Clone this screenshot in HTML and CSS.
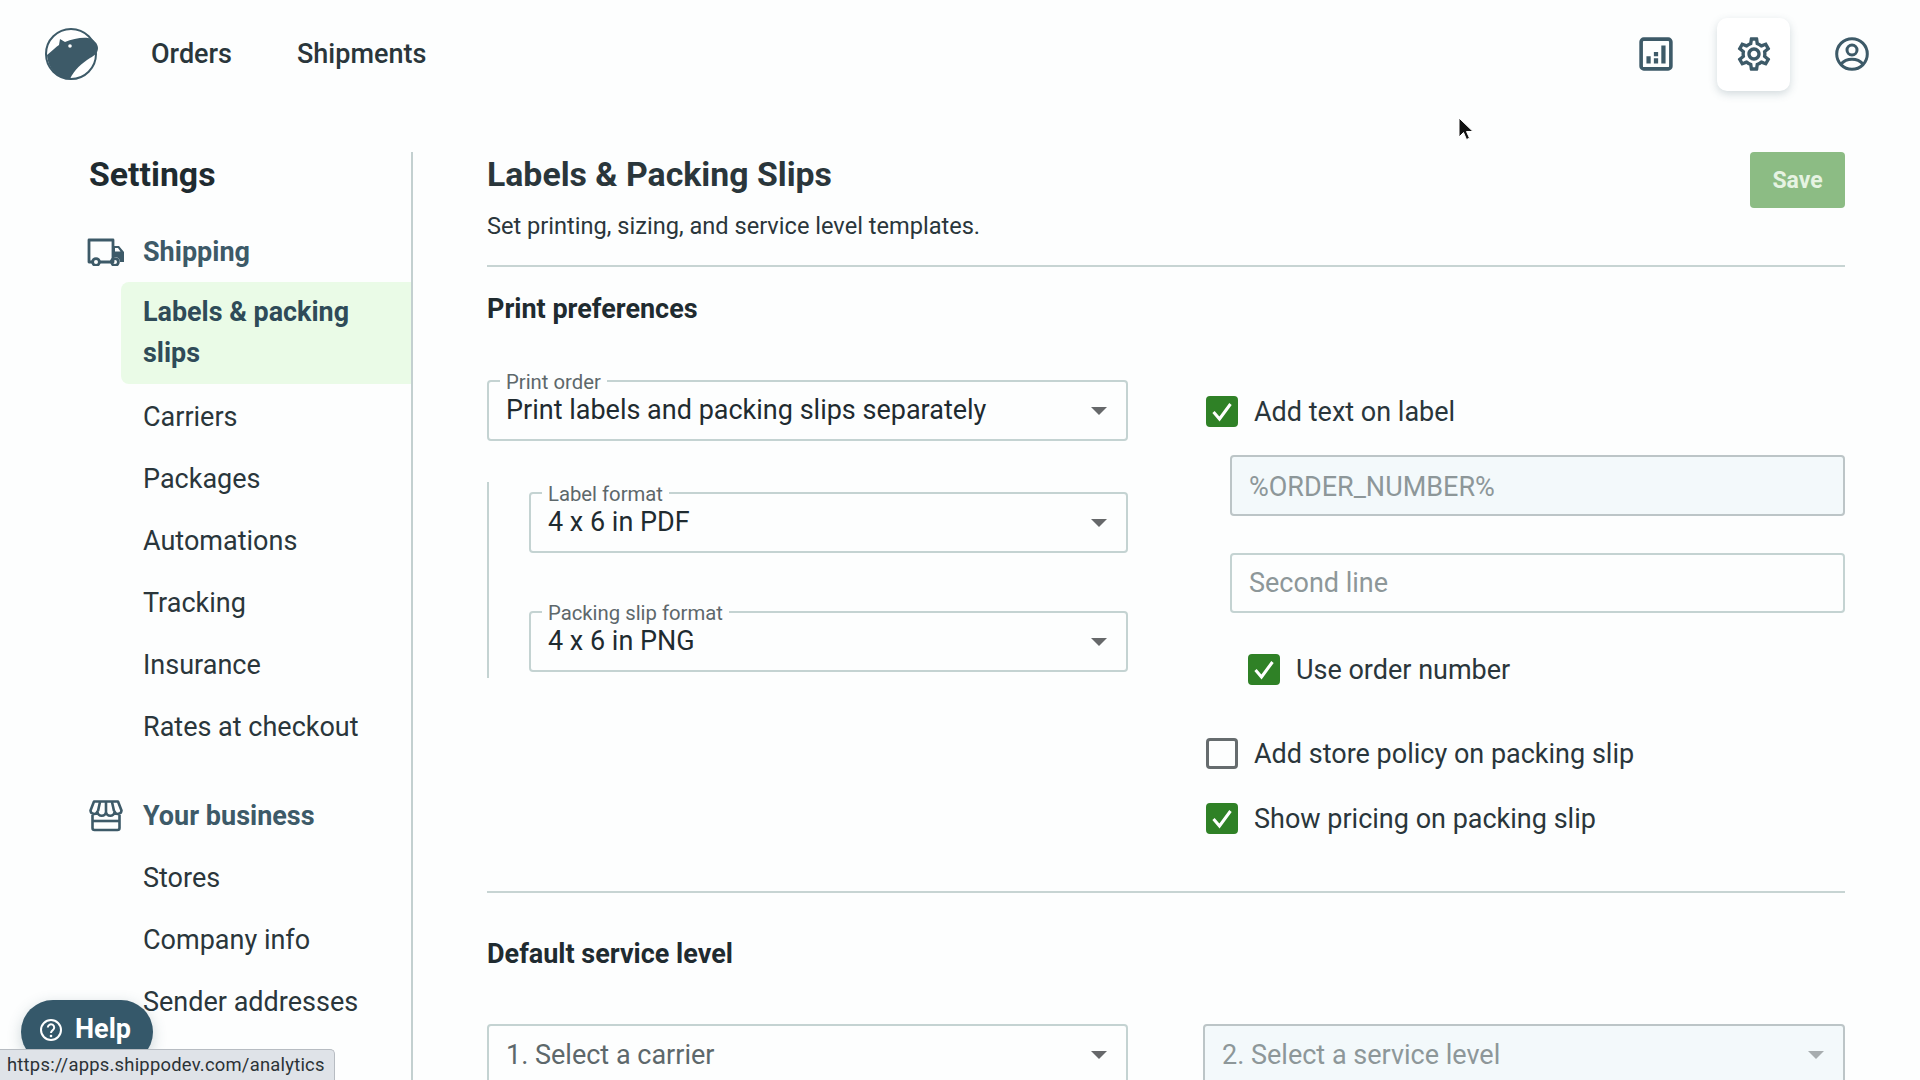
FILE: index.html
```html
<!DOCTYPE html>
<html lang="en">
<head>
<meta charset="utf-8">
<title>Labels &amp; Packing Slips</title>
<link rel="stylesheet" href="styles.css">
</head>
<body>
<header class="topbar">
  <svg class="logo" viewBox="0 0 56 54" aria-hidden="true">
    <circle cx="27" cy="27" r="25" fill="#fff" stroke="#3d5a68" stroke-width="2"/>
    <path d="M3 28C8 24 12 20 15 18L16 12L21 15C28 12 38 10 44 11C50 12 54 17 54 21C54 26 50 29 46 31C38 36 30 43 26 52C14 52 4 42 3 28Z" fill="#3d5a68"/>
    <circle cx="26" cy="19" r="1.800" fill="#fff"/>
  </svg>
  <nav class="topnav">
    <a class="topnav-link">Orders</a>
    <a class="topnav-link">Shipments</a>
  </nav>
  <div class="toolbar">
    <span class="tool">
      <svg class="tool-icon" viewBox="0 0 32 32" aria-hidden="true"><rect x="2" y="2" width="28" height="28" rx="2.500" fill="none" stroke="#3d5a68" stroke-width="3.400"/><path d="M7 18h4v7H7zM14 14h4v4h-4zM14 20h4v5h-4zM21 8h4v17h-4z" fill="#3d5a68"/></svg>
    </span>
    <span class="tool tool-active">
      <svg class="tool-gear" viewBox="0 0 24 24" aria-hidden="true"><path fill="#3d5a68" d="M19.430 12.980c.04-.32.07-.64.07-.98 0-.34-.03-.66-.07-.98l2.110-1.650c.19-.15.24-.42.12-.64l-2-3.460c-.09-.16-.26-.25-.44-.25-.06 0-.12.01-.17.03l-2.490 1c-.52-.4-1.080-.73-1.690-.98l-.38-2.650C14.460 2.180 14.250 2 14 2h-4c-.25 0-.46.18-.49.42l-.38 2.650c-.61.25-1.170.59-1.690.98l-2.490-1c-.06-.02-.12-.03-.18-.03-.17 0-.34.09-.43.25l-2 3.460c-.13.22-.07.49.12.64l2.110 1.650c-.04.32-.07.65-.07.98 0 .33.03.66.07.98l-2.110 1.650c-.19.15-.24.42-.12.64l2 3.460c.09.16.26.25.44.25.06 0 .12-.01.17-.03l2.490-1c.52.4 1.080.73 1.690.98l.38 2.650c.03.24.24.42.49.42h4c.25 0 .46-.18.49-.42l.38-2.650c.61-.25 1.170-.59 1.690-.98l2.490 1c.06.02.12.03.18.03.17 0 .34-.09.43-.25l2-3.460c.12-.22.07-.49-.12-.64l-2.110-1.650zm-1.980-1.710c.04.31.05.52.05.73 0 .21-.02.43-.05.73l-.14 1.130.89.7 1.080.84-.7 1.210-1.270-.51-1.040-.42-.9.68c-.43.32-.84.56-1.250.73l-1.060.43-.16 1.130-.2 1.350h-1.400l-.19-1.350-.16-1.130-1.060-.43c-.43-.18-.83-.41-1.230-.71l-.91-.7-1.060.43-1.270.51-.7-1.210 1.080-.84.89-.7-.14-1.130c-.03-.31-.05-.54-.05-.74s.02-.43.05-.73l.14-1.130-.89-.7-1.080-.84.7-1.210 1.270.51 1.040.42.9-.68c.43-.32.84-.56 1.250-.73l1.060-.43.16-1.130.2-1.350h1.390l.19 1.350.16 1.130 1.060.43c.43.18.83.41 1.230.71l.91.7 1.060-.43 1.270-.51.7 1.210-1.070.85-.89.7.14 1.130zM12 8c-2.210 0-4 1.790-4 4s1.790 4 4 4 4-1.790 4-4-1.790-4-4-4zm0 6c-1.100 0-2-.9-2-2s.9-2 2-2 2 .9 2 2-.9 2-2 2z"/></svg>
    </span>
    <span class="tool">
      <svg class="tool-icon" viewBox="0 0 34 34" aria-hidden="true"><g fill="none" stroke="#3d5a68" stroke-width="3"><circle cx="17" cy="17" r="15.300"/><circle cx="17" cy="13" r="5"/><path d="M6 27c3-3.500 7-4.800 11-4.800s8 1.300 11 4.800"/></g></svg>
    </span>
  </div>
</header>

<div class="layout">
  <aside class="sidebar">
    <h2 class="sidebar-title">Settings</h2>
    <div class="nav-group nav-group-first">
      <svg class="group-icon" viewBox="0 0 38 28" aria-hidden="true"><g fill="none" stroke="#3d5a68" stroke-width="2.800" stroke-linejoin="round"><path d="M5 24H2V2h24v22H13"/><circle cx="9" cy="24" r="3.400"/><circle cx="28" cy="24" r="3.400"/></g><path d="M26 8h6l5 6H26zM26 14h11v10h-4a5 5 0 0 0-10 0h3z" fill="#3d5a68"/><path d="M28 10h3l2.500 3.500H28z" fill="#fdfefe"/></svg>
      <span>Shipping</span>
    </div>
    <a class="nav-item nav-item-active">Labels &amp; packing slips</a>
    <a class="nav-item">Carriers</a>
    <a class="nav-item">Packages</a>
    <a class="nav-item">Automations</a>
    <a class="nav-item">Tracking</a>
    <a class="nav-item">Insurance</a>
    <a class="nav-item">Rates at checkout</a>
    <div class="nav-group nav-group-next">
      <svg class="group-icon group-icon-store" viewBox="0 0 34 32" aria-hidden="true"><g fill="none" stroke="#3d5a68" stroke-width="2.600" stroke-linejoin="round"><path d="M5 1.500h24l3.500 9a3.600 3.600 0 0 1-7 1 3.600 3.600 0 0 1-8.500 0 3.600 3.600 0 0 1-8.500 0 3.600 3.600 0 0 1-7-1z"/><path d="M11 2l-2 9M17 2v9M23 2l2 9"/><path d="M3.500 15v13a2 2 0 0 0 2 2h23a2 2 0 0 0 2-2V15"/><path d="M4 21h26"/></g></svg>
      <span>Your business</span>
    </div>
    <a class="nav-item">Stores</a>
    <a class="nav-item">Company info</a>
    <a class="nav-item">Sender addresses</a>
  </aside>

  <main class="content">
    <div class="page-head">
      <div>
        <h1 class="page-title">Labels &amp; Packing Slips</h1>
        <p class="page-sub">Set printing, sizing, and service level templates.</p>
      </div>
      <button class="save" type="button">Save</button>
    </div>

    <section class="section section-print">
      <h3 class="section-title">Print preferences</h3>
      <div class="print-grid">
        <div class="print-left">
          <div class="select">
            <span class="select-label">Print order</span>
            <span class="select-value">Print labels and packing slips separately</span>
            <span class="caret"></span>
          </div>
          <div class="nested">
            <div class="select">
              <span class="select-label">Label format</span>
              <span class="select-value">4 x 6 in PDF</span>
              <span class="caret"></span>
            </div>
            <div class="select">
              <span class="select-label">Packing slip format</span>
              <span class="select-value">4 x 6 in PNG</span>
              <span class="caret"></span>
            </div>
          </div>
        </div>
        <div class="print-right">
          <div class="check">
            <span class="box box-on"><svg viewBox="0 0 31 31" aria-hidden="true"><path d="M7 16l6 7L24 8" fill="none" stroke="#fff" stroke-width="3"/></svg></span>
            <span>Add text on label</span>
          </div>
          <div class="input input-disabled">%ORDER_NUMBER%</div>
          <div class="input input-second">Second line</div>
          <div class="check check-sub">
            <span class="box box-on"><svg viewBox="0 0 31 31" aria-hidden="true"><path d="M7 16l6 7L24 8" fill="none" stroke="#fff" stroke-width="3"/></svg></span>
            <span>Use order number</span>
          </div>
          <div class="check check-policy">
            <span class="box"></span>
            <span>Add store policy on packing slip</span>
          </div>
          <div class="check check-pricing">
            <span class="box box-on"><svg viewBox="0 0 31 31" aria-hidden="true"><path d="M7 16l6 7L24 8" fill="none" stroke="#fff" stroke-width="3"/></svg></span>
            <span>Show pricing on packing slip</span>
          </div>
        </div>
      </div>
    </section>

    <section class="section section-service">
      <h3 class="section-title">Default service level</h3>
      <div class="service-grid">
        <div class="select select-plain">
          <span class="select-value select-muted">1. Select a carrier</span>
          <span class="caret"></span>
        </div>
        <div class="select select-plain select-disabled">
          <span class="select-value select-faint">2. Select a service level</span>
          <span class="caret caret-faint"></span>
        </div>
      </div>
    </section>
  </main>
</div>

<div class="help">
  <svg class="help-icon" viewBox="0 0 24 24" aria-hidden="true"><circle cx="12" cy="12" r="10" fill="none" stroke="#fff" stroke-width="2"/><path d="M8.800 9.500a3.200 3.200 0 1 1 5 2.700c-1.200.8-1.800 1.400-1.800 2.800" fill="none" stroke="#fff" stroke-width="2"/><circle cx="12" cy="18" r="1.300" fill="#fff"/></svg>
  <span>Help</span>
</div>
<div class="status">https://apps.shippodev.com/analytics</div>
<svg class="cursor" viewBox="0 0 16 24" aria-hidden="true"><path d="M1 1v19l4.500-4.500 3 7 3-1.300-3-6.700H15z" fill="#111" stroke="#fff" stroke-width="1"/></svg>
</body>
</html>
```

FILE: styles.css
```css
* { box-sizing: border-box; }
html, body { height: 100%; }
body {
  margin: 0;
  height: 1080px;
  overflow: hidden;
  background: #fdfefe;
  color: #1f2b30;
  font-family: Roboto, "Liberation Sans", sans-serif;
  font-size: 27px;
  position: relative;
}
h1, h2, h3, p { margin: 0; }

.topbar {
  height: 108px;
  display: flex;
  align-items: center;
  padding: 0 32px 0 44px;
}
.logo { width: 56px; height: 54px; display: block; margin-right: 51px; }
.topnav { display: flex; gap: 65px; }
.topnav-link { font-size: 27px; font-weight: 500; color: #2a363b; line-height: 32px; }
.toolbar { margin-left: auto; display: flex; gap: 25px; align-items: center; }
.tool { width: 73px; height: 73px; display: flex; align-items: center; justify-content: center; border-radius: 10px; }
.tool-active { background: #fff; box-shadow: 0 3px 8px rgba(61, 90, 104, .22); }
.tool-icon { width: 34px; height: 34px; display: block; }
.tool-gear { width: 40px; height: 40px; display: block; }

.layout { display: flex; height: 972px; padding-top: 44px; }
.sidebar {
  width: 413px;
  flex: none;
  padding-left: 89px;
  border-right: 2px solid #c3d0d0;
  overflow: hidden;
}
.sidebar-title { font-size: 33.800px; font-weight: 700; line-height: 48px; color: #1f2b30; margin-top: -1px; }
.nav-group {
  display: flex;
  align-items: center;
  margin-left: -2px;
  height: 62px;
  font-weight: 700;
  font-size: 27px;
  color: #3d5a68;
}
.nav-group-first { margin-top: 22px; height: 61px; }
.nav-group-next { margin-top: 27px; }
.group-icon { width: 38px; height: 28px; margin-right: 18px; flex: none; }
.group-icon-store { height: 32px; }
.nav-item {
  display: flex;
  align-items: center;
  height: 62px;
  margin-left: 54px;
  font-size: 27px;
  color: #2a363b;
}
.nav-item-active {
  height: 102px;
  margin-left: 32px;
  padding: 0 40px 0 22px;
  line-height: 41px;
  font-weight: 700;
  font-size: 26.900px;
  background: #eafbe7;
  border-radius: 8px 0 0 8px;
  color: #2f4b58;
  margin-bottom: 2px;
}

.content { flex: 1; padding: 0 75px 0 74px; min-width: 0; }
.page-head {
  height: 117px;
  display: flex;
  justify-content: space-between;
  align-items: flex-start;
  border-bottom: 2px solid #c7d4d3;
  margin-top: -2px;
}
.page-title { font-size: 33.800px; font-weight: 700; line-height: 48px; color: #2a363b; padding-top: 1px; height: 49px; }
.page-sub { font-size: 23.600px; line-height: 30px; margin-top: 12px; color: #2a363b; }
.save {
  width: 95px;
  height: 56px;
  border: 0;
  border-radius: 4px;
  background: #8cbc84;
  color: #e6f3e2;
  font: 700 23px Roboto, sans-serif;
  margin-top: 2px;
  padding: 0;
}

.section-print { height: 626px; border-bottom: 2px solid #c7d4d3; }
.section-title { font-size: 27px; font-weight: 700; line-height: 36px; color: #1f2b30; padding-top: 24px; box-sizing: content-box; height: 36px; }
.print-grid { display: grid; grid-template-columns: 641px 1fr; column-gap: 78px; margin-top: 53px; }

.select {
  position: relative;
  height: 61px;
  border: 2px solid #c4d3d2;
  border-radius: 4px;
  display: flex;
  align-items: center;
  padding: 0 17px 1px;
}
.select-label {
  position: absolute;
  left: 11px;
  top: -11px;
  padding: 0 6px;
  background: #fdfefe;
  font-size: 20.300px;
  line-height: 22px;
  color: #5d686b;
}
.select-value { font-size: 27px; color: #1f2b30; white-space: nowrap; line-height: 32px; }
.caret {
  position: absolute;
  right: 19px;
  top: 25px;
  width: 0;
  height: 0;
  border-left: 8px solid transparent;
  border-right: 8px solid transparent;
  border-top: 8px solid #66686a;
}
.nested {
  margin-top: 41px;
  padding: 10px 0 6px 40px;
  border-left: 2px solid #c4d3d2;
  display: flex;
  flex-direction: column;
  gap: 58px;
}

.print-right { display: flex; flex-direction: column; }
.check { display: flex; align-items: center; gap: 16px; height: 31px; color: #2a363b; font-size: 27px; }
.check:first-child { margin-top: 16px; }
.check-sub { margin: 41px 0 0 42px; }
.check-policy { margin-top: 53px; }
.check-pricing { margin-top: 34px; }
.box {
  width: 32px;
  height: 31px;
  flex: none;
  border: 3px solid #666c6e;
  border-radius: 4px;
  display: block;
}
.box-on { background: #2f8126; border-color: #2f8126; }
.box-on svg { display: block; width: 32px; height: 31px; margin: -3px; }
.input {
  margin-left: 24px;
  height: 60px;
  border: 2px solid #c4d3d2;
  border-radius: 4px;
  display: flex;
  align-items: center;
  padding: 0 17px;
  color: #8d9799;
  font-size: 27px;
}
.input-disabled { margin-top: 28px; height: 61px; padding-top: 2px; background: #f3f9fb; border-color: #bcc5c7; }
.input-second { margin-top: 37px; }

.section-service .section-title { padding-top: 43px; }
.service-grid { display: grid; grid-template-columns: 641px 642px; column-gap: 75px; margin-top: 52px; }
.select-plain { height: 80px; align-items: flex-start; padding-top: 13px; }
.select-muted { color: #5d686b; }
.select-faint { color: #8d9799; }
.select-disabled { background: #f3f9fb; border-color: #bcc5c7; }
.caret-faint { border-top-color: #a7adaf; }

.help {
  position: absolute;
  left: 21px;
  top: 1000px;
  width: 132px;
  height: 64px;
  border-radius: 32px;
  background: #35586a;
  color: #fff;
  font-size: 27px;
  font-weight: 700;
  display: flex;
  align-items: flex-start;
  padding: 13px 0 0 18px;
  gap: 12px;
  line-height: 32px;
  box-shadow: 0 4px 14px rgba(61, 90, 104, .25);
}
.help-icon { width: 24px; height: 24px; margin-top: 5px; flex: none; }
.status {
  position: absolute;
  left: 0;
  bottom: 0;
  width: 335px;
  height: 31px;
  background: #dfe3e8;
  border: 1px solid #b7bcc2;
  border-left: 0;
  border-bottom: 0;
  border-radius: 0 5px 0 0;
  color: #2b3236;
  font-size: 18.400px;
  line-height: 29px;
  padding-left: 7px;
  font-family: Roboto, sans-serif;
  letter-spacing: .23px;
}
.cursor { position: absolute; left: 1458px; top: 117px; width: 16px; height: 24px; }
```
